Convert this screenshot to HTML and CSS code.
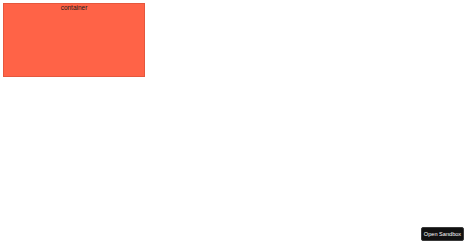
FILE: index.html
```html
<!DOCTYPE html>
<html>
<head>
<meta charset="utf-8">
<link rel="stylesheet" href="styles.css">
</head>
<body>
<div class="container">container</div>
<a class="sandbox-btn">Open Sandbox</a>
</body>
</html>
```

FILE: styles.css
```css
html, body {
  margin: 0;
  padding: 0;
  width: 474px;
  height: 248px;
  background: #ffffff;
  overflow: hidden;
}
body {
  position: relative;
  font-family: "Liberation Sans", Arial, sans-serif;
}
.container {
  margin: 3px;
  width: 142px;
  height: 74px;
  box-sizing: border-box;
  background: #ff6347;
  border: 1px solid rgba(150, 50, 30, 0.25);
  text-align: center;
  font-size: 6.5px;
  line-height: 8px;
  color: #1a1a1a;
}
.sandbox-btn {
  position: absolute;
  right: 10px;
  bottom: 7px;
  width: 43px;
  height: 14px;
  box-sizing: border-box;
  background: #111;
  border: 1px solid #3a3a3a;
  border-radius: 2px;
  color: #fff;
  font-size: 5.6px;
  line-height: 12px;
  text-align: center;
  white-space: nowrap;
}
```
